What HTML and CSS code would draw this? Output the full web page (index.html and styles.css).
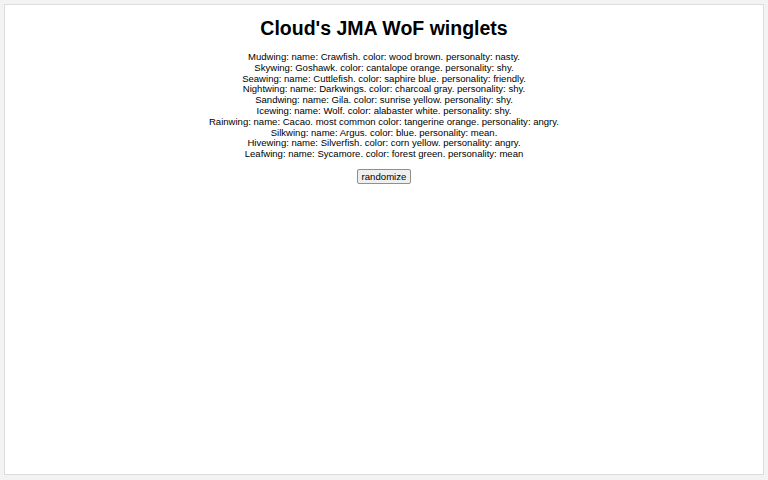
FILE: index.html
```html
<!DOCTYPE html>
<html>
<head>
<meta charset="utf-8">
<link rel="stylesheet" href="styles.css">
</head>
<body>
<div class="frame">
  <h1 class="title">Cloud's JMA WoF winglets</h1>
  <div class="list">
    <div>Mudwing: name: Crawfish. color: wood brown. personalty: nasty.</div>
    <div>Skywing: Goshawk. color: cantalope orange. personality: shy.</div>
    <div>Seawing: name: Cuttlefish. color: saphire blue. personality: friendly.</div>
    <div>Nightwing: name: Darkwings. color: charcoal gray. personality: shy.</div>
    <div>Sandwing: name: Gila. color: sunrise yellow. personality: shy.</div>
    <div>Icewing: name: Wolf. color: alabaster white. personality: shy.</div>
    <div>Rainwing: name: Cacao. most common color: tangerine orange. personality: angry.</div>
    <div>Silkwing: name: Argus. color: blue. personality: mean.</div>
    <div>Hivewing: name: Silverfish. color: corn yellow. personality: angry.</div>
    <div>Leafwing: name: Sycamore. color: forest green. personality: mean</div>
  </div>
  <div class="actions"><button class="btn">randomize</button></div>
</div>
</body>
</html>
```
FILE: styles.css
```css
html, body {
  margin: 0;
  padding: 0;
}
body {
  background: #f3f3f3;
  padding: 4px;
  font-family: "Liberation Sans", Arial, sans-serif;
  color: #000;
}
.frame {
  background: #fff;
  border: 1px solid #dcdcdc;
  height: 471px;
  box-sizing: border-box;
  text-align: center;
}
.title {
  margin: 0;
  padding-top: 12px;
  font-size: 19.5px;
  line-height: 22px;
  font-weight: bold;
}
.list {
  margin-top: 13px;
  font-size: 9.55px;
  line-height: 10.8px;
}
.actions {
  margin-top: 6px;
}
.btn {
  font-family: "Liberation Sans", Arial, sans-serif;
  font-size: 9.6px;
  line-height: 10px;
  padding: 2px 4px 1px;
  background: #efefef;
  border: 1px solid #8f8f8f;
  border-radius: 2px;
  color: #000;
}
```
